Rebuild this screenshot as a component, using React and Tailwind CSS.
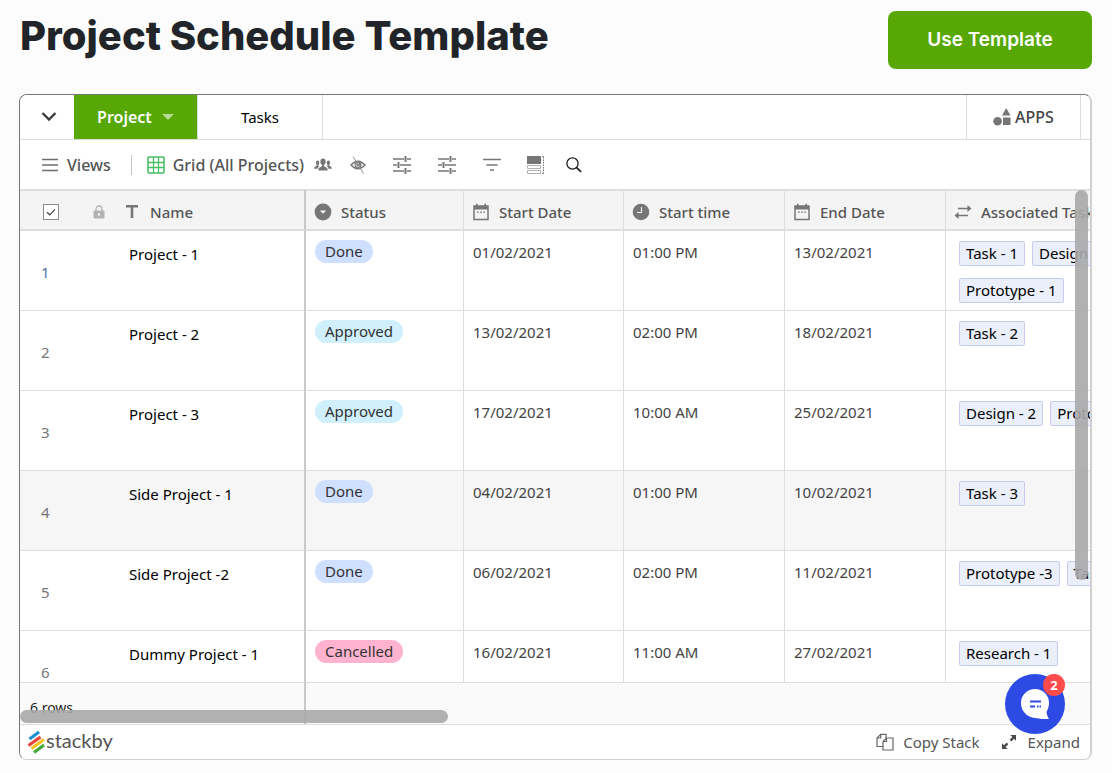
const icon = "block shrink-0";

function Svg({ size = 18, box = 24, className = "", children }) {
  return (
    <svg width={size} height={size} viewBox={`0 0 ${box} ${box}`} className={`${icon} ${className}`} aria-hidden="true">
      {children}
    </svg>
  );
}

const Calendar = () => (
  <Svg size={18} box={18}>
    <path d="M2 3h14v13.500H2z" fill="none" stroke="#767676" strokeWidth="1.500" />
    <path d="M2 3h14v3.400H2z" fill="#767676" />
    <path d="M4.800.8V4M13.200.8V4" stroke="#767676" strokeWidth="1.600" />
    <path d="M5.200 8.500h1.400v1.400H5.200zM8.300 8.500h1.400v1.400H8.300zM11.400 8.500h1.400v1.400h-1.400z" fill="#767676" />
  </Svg>
);

const CaretCircle = () => (
  <Svg size={18} box={18}>
    <circle cx="9" cy="9" r="8.4" fill="#767676" />
    <path d="M5.8 7.5h6.4L9 10.8z" fill="#f4f4f4" />
  </Svg>
);

const Clock = () => (
  <Svg size={18} box={18}>
    <circle cx="9" cy="9" r="8.3" fill="#767676" />
    <path d="M9.500 4v5.500H5" fill="none" stroke="#f4f4f4" strokeWidth="1.200" />
  </Svg>
);

const Swap = () => (
  <Svg size={18} box={18}>
    <path d="M4 5.500h10M4 12.500h10" stroke="#767676" strokeWidth="1.600" />
    <path d="M13.500 2L17.500 5.500 13.500 9zM4.500 9L.5 12.500 4.500 16z" fill="#767676" />
  </Svg>
);

const Tune = () => (
  <Svg size={20} box={20}>
    <path d="M1 4h11M15 4h4M1 10h4M8 10h11M1 16h11M15 16h4" stroke="#767676" strokeWidth="1.300" />
    <path d="M13.500 1v6M6.500 7v6M13.500 13v6" stroke="#767676" strokeWidth="2" />
  </Svg>
);

const Users = () => (
  <Svg size={18} box={18}>
    <g fill="#767676">
      <ellipse cx="9" cy="5.800" rx="2.600" ry="3.300" />
      <path d="M4.300 14.500c0-2.800 1.200-3.400 3.700-4.300V8.500h2v1.700c2.500.9 3.700 1.500 3.700 4.300z" />
      <ellipse cx="3.600" cy="6.800" rx="1.700" ry="2.400" />
      <ellipse cx="14.400" cy="6.800" rx="1.700" ry="2.400" />
      <path d="M.2 12.800c0-1.900.9-2.400 2.600-3V8.500h1.600v1.300l1 .4c-1.300.600-1.700 1.300-1.800 2.600zM17.800 12.800c0-1.900-.9-2.400-2.600-3V8.500h-1.600v1.300l-1 .4c1.300.600 1.700 1.300 1.800 2.600z" />
    </g>
  </Svg>
);

const HiddenEye = () => (
  <Svg size={18} box={18}>
    <path d="M2 9q7-7.500 14 0q-7 7.500-14 0z" fill="none" stroke="#767676" strokeWidth="1.300" />
    <circle cx="9" cy="9" r="3.500" fill="#767676" />
    <path d="M10 7.400a1.900 1.900 0 1 0 .8 2" stroke="#fff" strokeWidth=".8" fill="none" />
    <path d="M4 .5l10.500 17" stroke="#8a8a8a" strokeWidth=".9" />
  </Svg>
);

const FilterLines = () => (
  <Svg size={20} box={20}>
    <path d="M1 4.500h18M4.500 10h11M8 15h4" stroke="#767676" strokeWidth="1.700" />
  </Svg>
);

const RowHeight = () => (
  <Svg size={18} box={18}>
    <path d="M0 0h14v8H0z" fill="#767676" />
    <path d="M.5 9.500h13v3H.5zM.5 14.500h13v3H.5z" fill="none" stroke="#b0b0b0" />
    <path d="M15 .5h2M16.500 1v16M15 17.500h2" stroke="#767676" strokeDasharray="1.500 1" />
  </Svg>
);

const Search = () => (
  <Svg size={18} box={18}>
    <circle cx="7.500" cy="7.500" r="5.600" fill="none" stroke="#1f1f1f" strokeWidth="1.300" />
    <path d="M11.600 11.600l4.400 4.200" stroke="#1f1f1f" strokeWidth="1.800" />
  </Svg>
);

const GridIcon = () => (
  <Svg size={18} box={18}>
    <rect x="1" y="1" width="16" height="16" rx="1" fill="#fff" stroke="#4bbd64" strokeWidth="1.600" />
    <path d="M6.500 1v16M11.500 1v16M1 6.500h16M1 11.500h16" stroke="#4bbd64" strokeWidth="1.300" />
  </Svg>
);

const Shapes = () => (
  <Svg size={18} box={18}>
    <path d="M13.200 0l4.300 7.500H9z" fill="#767676" />
    <circle cx="4.600" cy="13.300" r="4.300" fill="#767676" />
    <path d="M10 9.600h7.500v7.500H10z" fill="#767676" />
  </Svg>
);

const Lock = () => (
  <Svg size={14} box={14}>
    <path d="M4 6V4a3 3 0 0 1 6 0v2" fill="none" stroke="#b3b3b3" strokeWidth="1.300" />
    <rect x="1.500" y="5.500" width="11" height="8" rx="1" fill="#b3b3b3" />
    <circle cx="7" cy="9.500" r="1.200" fill="#f4f4f4" />
  </Svg>
);

const Expand = () => (
  <Svg size={14} box={14}>
    <path d="M8.300 0H14v5.700l-2-2L9.300 6.400 7.700 4.800l2.700-2.700zM5.700 14H0V8.300l2 2 2.700-2.700 1.600 1.600-2.700 2.700z" fill="#4a4a4a" />
  </Svg>
);

const CopyPages = () => (
  <Svg size={18} box={18}>
    <path
      d="M6.500 13.500H1V5l3.700-3.700H10V5M4.700 1.300V5H1M7 17V8.500L10.500 5H17v12zM10.500 5v3.500H7"
      fill="none"
      stroke="#666"
      strokeWidth="1.200"
    />
  </Svg>
);

const LogoMark = () => (
  <Svg size={24} box={24}>
    <g fill="none" strokeWidth="3.200">
      <path d="M3.500 9L13 2" stroke="#1c92d2" />
      <path d="M2.500 15.500L14.500 7" stroke="#e8453c" />
      <path d="M5.500 18.500L18 9.500" stroke="#fbc11c" />
      <path d="M8 22.500L18 15" stroke="#46a83c" />
    </g>
  </Svg>
);

const tones = {
  Done: "bg-[#cfdfff]",
  Approved: "bg-[#d0f0fd]",
  Cancelled: "bg-[#ffb3cf]",
};

const rows = [
  { name: "Project - 1", status: "Done", start: "01/02/2021", time: "01:00 PM", end: "13/02/2021", tasks: ["Task - 1", "Design - 1", "Prototype - 1"] },
  { name: "Project - 2", status: "Approved", start: "13/02/2021", time: "02:00 PM", end: "18/02/2021", tasks: ["Task - 2"] },
  { name: "Project - 3", status: "Approved", start: "17/02/2021", time: "10:00 AM", end: "25/02/2021", tasks: ["Design - 2", "Prototype - 2"] },
  { name: "Side Project - 1", status: "Done", start: "04/02/2021", time: "01:00 PM", end: "10/02/2021", tasks: ["Task - 3"] },
  { name: "Side Project -2", status: "Done", start: "06/02/2021", time: "02:00 PM", end: "11/02/2021", tasks: ["Prototype -3", "Task - 4"] },
  { name: "Dummy Project - 1", status: "Cancelled", start: "16/02/2021", time: "11:00 AM", end: "27/02/2021", tasks: ["Research - 1"] },
];

const columns = [
  { label: "Status", Icon: CaretCircle },
  { label: "Start Date", Icon: Calendar },
  { label: "Start time", Icon: Clock },
  { label: "End Date", Icon: Calendar },
  { label: "Associated Tasks", Icon: Swap },
];

function Tabs() {
  return (
    <nav className="flex h-[45px] items-stretch border-b border-[#dcdcdc] bg-white">
      <button aria-label="All tables" className="flex w-[54px] items-center justify-center pl-1">
        <Svg size={16} box={16}>
          <path d="M1.500 4L8 10.500 14.500 4" fill="none" stroke="#3c3c3c" strokeWidth="2.400" />
        </Svg>
      </button>
      <button className="flex w-[123px] items-center justify-center gap-[10px] bg-[#57a804] text-base font-semibold text-white">
        Project
        <svg width="12" height="6" viewBox="0 0 12 6" aria-hidden="true">
          <path d="M0 0h12L6 6z" fill="#b6da94" />
        </svg>
      </button>
      <button className="w-[126px] border-x border-[#dcdcdc] text-black">Tasks</button>
      <button className="mr-[9px] ml-auto flex w-[115px] items-center justify-center gap-1 border-x border-[#dcdcdc] text-base font-medium text-[#444]">
        <Shapes />
        APPS
      </button>
    </nav>
  );
}

function Toolbar() {
  return (
    <div className="flex h-[49px] items-center bg-white pl-[22px] text-base font-medium text-[#555]">
      <button className="flex items-center gap-[9px]">
        <Svg size={16} box={16}>
          <path d="M0 2.500h16M0 8h16M0 13.500h16" stroke="#6e6e6e" strokeWidth="1.300" />
        </Svg>
        Views
      </button>
      <span className="mr-[15px] ml-5 h-5 w-px bg-[#c4c4c4]" />
      <button className="flex items-center gap-2">
        <GridIcon />
        Grid (All Projects)
      </button>
      <div className="flex items-center">
        <button aria-label="Collaborators" className="ml-[10px]"><Users /></button>
        <button aria-label="Hide columns" className="ml-[17px]"><HiddenEye /></button>
        <button aria-label="Sort" className="ml-[25px]"><Tune /></button>
        <button aria-label="Group" className="ml-[25px]"><Tune /></button>
        <button aria-label="Filter" className="ml-[25px]"><FilterLines /></button>
        <button aria-label="Row height" className="ml-[25px]"><RowHeight /></button>
        <button aria-label="Search" className="ml-5"><Search /></button>
      </div>
    </div>
  );
}

function HeaderRow() {
  return (
    <tr className="h-[42px] bg-[#f4f4f4] text-left text-[#555]">
      <th className="border-y-2 border-r-2 border-y-[#dedede] border-r-[#c9c9c9] p-0 font-medium">
        <div className="flex items-center pt-1 pl-[23px]">
          <span className="grid size-4">
            <input type="checkbox" defaultChecked aria-label="Select all rows" className="col-start-1 row-start-1 size-4 appearance-none border border-[#8c8c8c] bg-white" />
            <svg className="pointer-events-none z-10 col-start-1 row-start-1" width="16" height="16" viewBox="0 0 16 16" aria-hidden="true">
              <path d="M4 8.200l2.700 2.600L12 5.300" fill="none" stroke="#444" strokeWidth="1.200" />
            </svg>
          </span>
          <span className="ml-[33px]"><Lock /></span>
          <svg className="ml-5" width="12" height="14" viewBox="0 0 12 14" aria-hidden="true">
            <path d="M0 0h12v2.400H7.300V13H4.700V2.400H0z" fill="#767676" />
          </svg>
          <span className="ml-3">Name</span>
        </div>
      </th>
      {columns.map(({ label, Icon }) => (
        <th key={label} className="border-y-2 border-r border-[#dedede] p-0 font-medium whitespace-nowrap">
          <div className="flex items-center gap-[9px] pt-1 pl-2">
            <Icon />
            {label}
          </div>
        </th>
      ))}
    </tr>
  );
}

function Row({ row, index }) {
  const last = index === rows.length - 1;
  const tone = index === 3 ? "bg-[#f6f6f6]" : "bg-white";
  const cell = "border-r border-b border-[#dedede] px-[9px] pt-[9px] pb-0";
  return (
    <tr className={`${last ? "h-[52px]" : "h-20"} ${tone} align-top text-[#444]`}>
      <th scope="row" className="border-r-2 border-b border-r-[#c9c9c9] border-b-[#dedede] p-0 text-left font-normal">
        <div className="flex pl-[21px]">
          <span className={`w-[88px] pt-[31px] ${index === 0 ? "text-[#4c74a8]" : "text-[#777]"}`}>{index + 1}</span>
          <span className="pt-[13px] text-black">{row.name}</span>
        </div>
      </th>
      <td className={cell}>
        <span className={`inline-block rounded-full px-[10px] leading-[23px] text-[#333] ${tones[row.status]}`}>{row.status}</span>
      </td>
      <td className={cell}><span className="block pt-[2px]">{row.start}</span></td>
      <td className={cell}><span className="block pt-[2px]">{row.time}</span></td>
      <td className={cell}><span className="block pt-[2px]">{row.end}</span></td>
      <td className="border-b border-[#dedede] p-0">
        <ul className="flex flex-wrap gap-x-[7px] gap-y-3 pt-[10px] pl-[13px] text-black">
          {row.tasks.map((task) => (
            <li key={task} className="rounded-xs border border-[#c8cbee] bg-[#eaeffa] px-[6px] leading-[23px] whitespace-nowrap">
              {task}
            </li>
          ))}
        </ul>
      </td>
    </tr>
  );
}

function Sheet() {
  return (
    <div className="relative overflow-hidden bg-[#fafafa]">
      <table className="w-full min-w-[1150px] table-fixed border-separate border-spacing-0">
        <colgroup>
          <col className="w-[286px]" />
          <col className="w-[158px]" />
          <col className="w-[160px]" />
          <col className="w-[161px]" />
          <col className="w-[161px]" />
          <col />
        </colgroup>
        <thead><HeaderRow /></thead>
        <tbody>
          {rows.map((row, index) => <Row key={row.name} row={row} index={index} />)}
        </tbody>
      </table>
      <div className="flex h-[42px] border-b border-[#dedede]">
        <div className="w-[286px] border-r-2 border-[#c9c9c9] pt-[15px] pl-[10px] text-sm text-[#222]">6 rows</div>
      </div>
      <div className="absolute top-px right-[2px] h-[390px] w-[13px] rounded-full bg-[#a9a9a9]/90" />
      <div className="absolute bottom-[2px] left-0 h-[13px] w-2/5 rounded-full bg-[#a9a9a9]/90" />
    </div>
  );
}

function Footer() {
  return (
    <footer className="flex h-[34px] items-center bg-white text-[#555]">
      <a href="#stackby" className="flex items-center pl-[6px] font-[Lato,sans-serif] text-xl text-[#555]">
        <LogoMark />
        <span className="-ml-1 pb-1">stackby</span>
      </a>
      <button className="ml-auto flex items-center gap-[9px]"><CopyPages />Copy Stack</button>
      <button className="mr-[10px] ml-[22px] flex items-center gap-3"><Expand />Expand</button>
    </footer>
  );
}

function ChatButton() {
  return (
    <button aria-label="Open chat, 2 unread" className="absolute right-[25px] bottom-[25px] size-[60px] rounded-full bg-[#2d4be4]">
      <svg width="60" height="60" viewBox="0 0 60 60" aria-hidden="true">
        <path d="M30 15a14 14 0 0 1 14 14c0 4-1.500 7-2.500 9 .3 3 1.200 4.800 2.500 7-4 0-9 0-14-1a15 15 0 0 1-14-15 14 14 0 0 1 14-14z" fill="#fff" />
        <path d="M25 27.500h11M25 32.500h5M32 32.500h1.500M34.500 32.500H36" stroke="#2d4be4" strokeWidth="1.800" />
      </svg>
      <span className="absolute top-0 right-0 flex size-[22px] items-center justify-center rounded-full bg-[#ff4b4b] text-[13px] font-bold text-white">2</span>
    </button>
  );
}

export default function App() {
  return (
    <div className="min-h-screen bg-[#fcfcfc] pt-[11px] pr-5 pb-[13px] pl-[19px] font-['Noto_Sans',sans-serif] text-[15px] leading-5">
      <header className="flex items-start justify-between pl-px font-[Inter,sans-serif]">
        <h1 className="text-[40px] leading-[50px] font-extrabold text-[#212529]">Project Schedule Template</h1>
        <button className="h-[58px] w-[204px] rounded-lg bg-[#57a804] text-[19px] font-semibold text-white">Use Template</button>
      </header>
      <main className="relative mt-[25px] overflow-hidden rounded-lg border-t border-r-2 border-b border-l border-t-[#767676] border-r-[#d0d0d0] border-b-[#d0d0d0] border-l-[#767676]">
        <Tabs />
        <Toolbar />
        <Sheet />
        <Footer />
        <ChatButton />
      </main>
    </div>
  );
}
